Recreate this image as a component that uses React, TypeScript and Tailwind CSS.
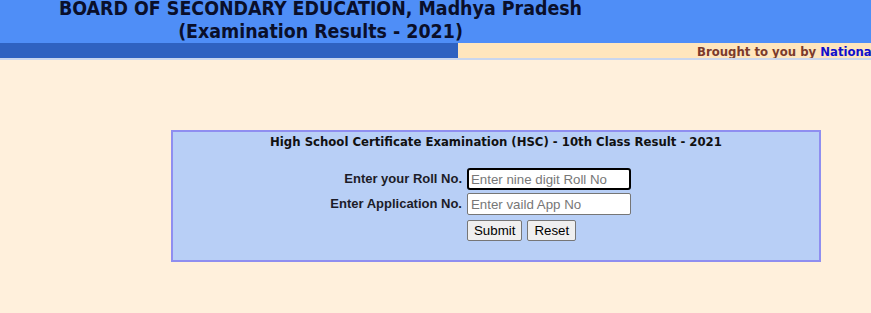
import React from 'react';

const App: React.FC = () => {
  return (
    <div className="min-h-[313px] w-[871px] overflow-hidden bg-[#fff0dc]">
      {/* header */}
      <div className="h-[43px] bg-[#4f8ef7] overflow-hidden">
        <div className="w-[641px] -mt-[3px] text-center font-['DejaVu_Sans_Condensed','DejaVu_Sans',sans-serif] text-[19.4px] font-bold leading-[23px] text-[#0a0f2a]">
          <div>BOARD OF SECONDARY EDUCATION, Madhya Pradesh</div>
          <div>(Examination Results - 2021)</div>
        </div>
      </div>

      {/* strip */}
      <div className="flex h-[17px] border-b-2 border-[#c9d6ee]">
        <div className="w-[458px] bg-[#2f62c1]"></div>
        <div className="flex-1 overflow-hidden whitespace-nowrap bg-[#ffe6bd] pl-[239px] font-['DejaVu_Sans_Condensed','DejaVu_Sans',sans-serif] text-[13px] font-bold leading-[17px] text-[#7b3a2c]">
          Brought to you by <span className="text-[#1010cc]">National Informatics Centre</span>
        </div>
      </div>

      {/* form box */}
      <div className="ml-[171px] mt-[70px] h-[132px] w-[650px] border-2 border-[#8f8ef0] bg-[#b8cff6]">
        <div className="pt-[1px] text-center font-['DejaVu_Sans_Condensed','DejaVu_Sans',sans-serif] text-[13px] font-bold leading-[18px] text-[#111]">
          High School Certificate Examination (HSC) - 10th Class Result - 2021
        </div>

        <div className="mt-[17px] flex flex-col gap-[3px] font-['Liberation_Sans',Arial,sans-serif]">
          <div className="flex items-center gap-[5px]">
            <label className="w-[289px] text-right text-[13px] font-bold text-[#1c1c28]">Enter your Roll No.</label>
            <input
              className="h-[22px] w-[164px] rounded-[3px] border-2 border-black bg-white px-[2px] text-[13.3px] placeholder:text-[#777] outline-none"
              placeholder="Enter nine digit Roll No"
            />
          </div>
          <div className="flex items-center gap-[5px]">
            <label className="w-[289px] text-right text-[13px] font-bold text-[#1c1c28]">Enter Application No.</label>
            <input
              className="h-[22px] w-[164px] rounded-[2px] border border-[#767676] bg-white px-[3px] text-[13.3px] placeholder:text-[#777] outline-none"
              placeholder="Enter vaild App No"
            />
          </div>
          <div className="flex gap-[5px] pl-[294px] pt-[2px]">
            <button className="h-[21px] rounded-[2px] border border-[#767676] bg-[#efefef] px-[6px] text-[13.3px] leading-[19px] text-black">
              Submit
            </button>
            <button className="h-[21px] rounded-[2px] border border-[#767676] bg-[#efefef] px-[6px] text-[13.3px] leading-[19px] text-black">
              Reset
            </button>
          </div>
        </div>
      </div>
    </div>
  );
};

export default App;
